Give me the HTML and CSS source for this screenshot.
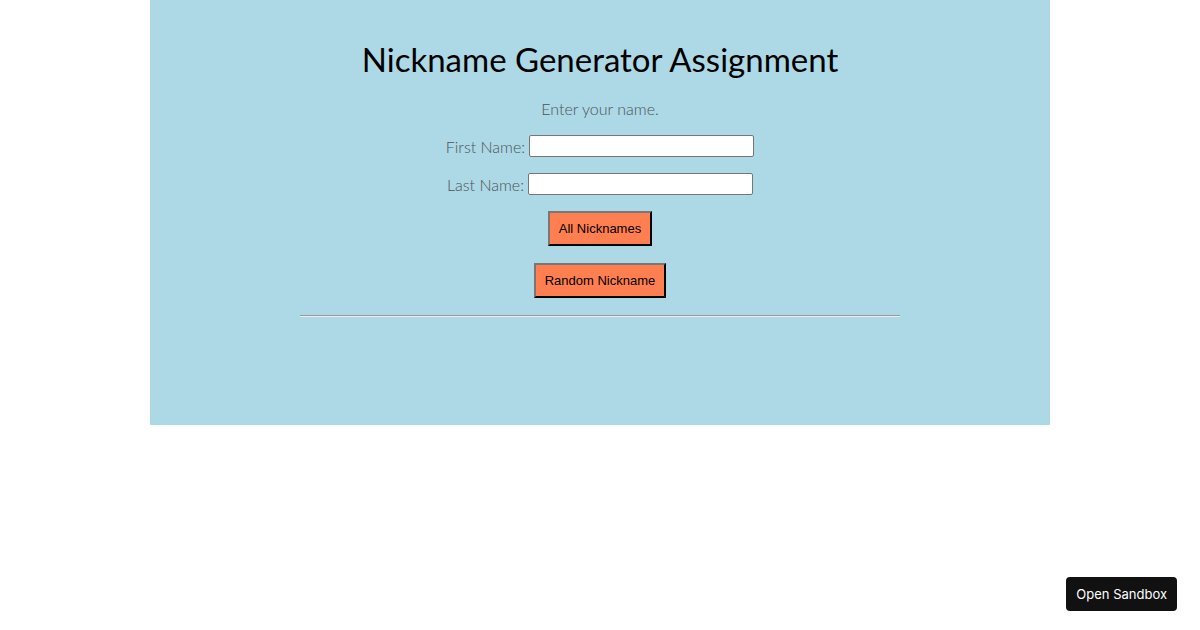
FILE: index.html
```html
<!DOCTYPE html>
<html>

<head>
    <title>Nickname Generator Assignment</title>
    <link rel="stylesheet" href="styles.css">
</head>

<body>
    <div class="main">
        <h1>Nickname Generator Assignment</h1>
        <p class="prompt">Enter your name.</p>
        <div class="field">
            <label for="first">First Name:</label>
            <input type="text" id="first" name="first">
        </div>
        <div class="field">
            <label for="last">Last Name:</label>
            <input type="text" id="last" name="last">
        </div>
        <div class="actions">
            <button type="button">All Nicknames</button>
            <button type="button">Random Nickname</button>
        </div>
        <hr>
        <div class="results"></div>
    </div>
    <a class="sandbox" href="#">Open Sandbox</a>
</body>

</html>
```

FILE: styles.css
```css
body {
    margin: 0;
    background-color: #ffffff;
    font-family: "Lato", "Open Sans", sans-serif;
}

.main {
    width: 900px;
    height: 425px;
    margin: 0 auto;
    background-color: #add8e6;
    padding-top: 39px;
    box-sizing: border-box;
    text-align: center;
}

h1 {
    margin: 0;
    font-size: 33px;
    font-weight: 400;
    color: #000000;
}

.prompt {
    margin: 20px 0 0;
    font-size: 16px;
    font-weight: 300;
    color: #4a5458;
}

.field {
    margin-top: 17px;
    display: flex;
    justify-content: center;
    align-items: center;
    gap: 4px;
}

.field + .field {
    margin-top: 16px;
}

.field label {
    font-size: 16px;
    font-weight: 300;
    color: #4a5458;
}

.field input {
    width: 225px;
    height: 22px;
    box-sizing: border-box;
    border: 1px solid #767676;
    border-radius: 2px;
    background-color: #ffffff;
}

.actions {
    display: flex;
    flex-direction: column;
    align-items: center;
    gap: 17px;
    margin-top: 16px;
}

.actions button {
    height: 35px;
    padding: 0 9px;
    background-color: #ff7f50;
    border: 2px outset #333333;
    border-top-color: #777777;
    border-left-color: #777777;
    font-family: "Liberation Sans", Arial, sans-serif;
    font-size: 13px;
    color: #000000;
}

hr {
    width: 600px;
    margin: 17px auto 0;
    border: 0;
    border-top: 1px solid #999999;
    border-bottom: 1px solid #eeeeee;
}

.sandbox {
    position: fixed;
    right: 23px;
    bottom: 19px;
    padding: 9px 10px;
    background-color: #111111;
    border-radius: 4px;
    color: #ffffff;
    font-family: "Inter", sans-serif;
    font-size: 13px;
    text-decoration: none;
}
```
